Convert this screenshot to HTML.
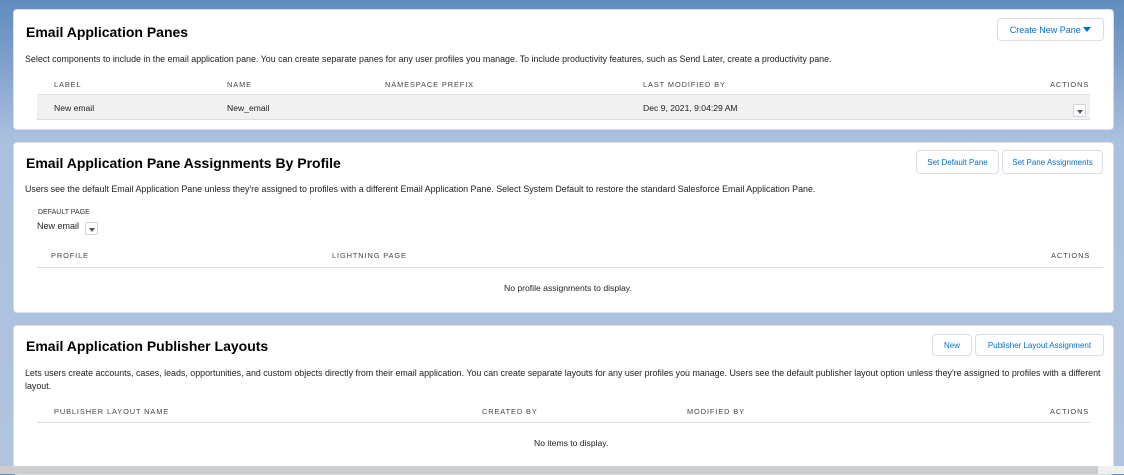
<!DOCTYPE html>
<html><head><meta charset="utf-8"><style>
*{margin:0;padding:0;box-sizing:border-box}
body{width:1124px;height:474px;overflow:hidden;position:relative;font-family:"Liberation Sans",sans-serif;background:linear-gradient(#5f8cbd 0px,#7e9fcb 60px,#aac0de 140px,#b0c4df 474px);color:#16325c}
.card{position:absolute;left:13px;width:1101px;background:#fff;border:1px solid #d8dde6;border-radius:4px}
.a{position:absolute;white-space:nowrap}
.t{font-size:14px;font-weight:bold;color:#000}
.d{font-size:8.9px;color:#222}
.h{font-size:7.4px;letter-spacing:.9px;color:#444}
.c{font-size:8.6px;color:#222}
.btn{position:absolute;border:1px solid #d8dde6;border-radius:4px;background:#fff;color:#0070d2;font-size:8.5px;display:flex;align-items:center;justify-content:center;white-space:nowrap}
.line{position:absolute;height:1px;background:#d8dde6}
.dd{position:absolute;width:13px;height:13px;border:1px solid #d0d4da;border-radius:2px;background:#fff}
.dd:after{content:"";position:absolute;left:3px;top:5px;border-left:3px solid transparent;border-right:3px solid transparent;border-top:4px solid #555}
</style></head><body>
<div class="card" style="top:9px;height:121px">
<div class="a t" style="left:12px;top:14px">Email Application Panes</div>
<div class="btn" style="left:983px;top:8px;width:107px;height:23px;font-size:9px">Create New Pane&nbsp;<span style="display:inline-block;border-left:4px solid transparent;border-right:4px solid transparent;border-top:5px solid #0070d2"></span></div>
<div class="a d" style="left:11px;top:44px">Select components to include in the email application pane. You can create separate panes for any user profiles you manage. To include productivity features, such as Send Later, create a productivity pane.</div>
<div class="a h" style="left:40px;top:70px">LABEL</div>
<div class="a h" style="left:213px;top:70px">NAME</div>
<div class="a h" style="left:371px;top:70px">NAMESPACE PREFIX</div>
<div class="a h" style="left:629px;top:70px">LAST MODIFIED BY</div>
<div class="a h" style="left:1036px;top:70px">ACTIONS</div>
<div class="line" style="left:23px;top:84px;width:1053px"></div>
<div style="position:absolute;left:23px;top:85px;width:1053px;height:25px;background:#f1f1f1;border-bottom:1px solid #d8dde6"></div>
<div class="a c" style="left:40px;top:93px">New email</div>
<div class="a c" style="left:213px;top:93px">New_email</div>
<div class="a c" style="left:629px;top:93px">Dec 9, 2021, 9:04:29 AM</div>
<div class="dd" style="left:1059px;top:94px"></div>
</div>
<div class="card" style="top:142px;height:171px">
<div class="a t" style="left:12px;top:12px">Email Application Pane Assignments By Profile</div>
<div class="btn" style="left:902px;top:7px;width:83px;height:24px;font-size:8px">Set Default Pane</div>
<div class="btn" style="left:988px;top:7px;width:101px;height:24px;font-size:8px">Set Pane Assignments</div>
<div class="a d" style="left:11px;top:41px">Users see the default Email Application Pane unless they're assigned to profiles with a different Email Application Pane. Select System Default to restore the standard Salesforce Email Application Pane.</div>
<div class="a" style="left:24px;top:66px;font-size:7px;color:#333">DEFAULT PAGE</div>
<div class="a c" style="left:23px;top:78px;font-size:9px">New email</div>
<div class="dd" style="left:71px;top:79px"></div>
<div class="a h" style="left:37px;top:108px">PROFILE</div>
<div class="a h" style="left:318px;top:108px">LIGHTNING PAGE</div>
<div class="a h" style="left:1037px;top:108px">ACTIONS</div>
<div class="line" style="left:23px;top:124px;width:1066px"></div>
<div class="a c" style="left:490px;top:140px">No profile assignments to display.</div>
</div>
<div class="card" style="top:325px;height:150px">
<div class="a t" style="left:12px;top:12px">Email Application Publisher Layouts</div>
<div class="btn" style="left:918px;top:8px;width:40px;height:22px;font-size:8px">New</div>
<div class="btn" style="left:961px;top:8px;width:129px;height:22px;font-size:8px">Publisher Layout Assignment</div>
<div class="a d" style="left:11px;top:42px">Lets users create accounts, cases, leads, opportunities, and custom objects directly from their email application. You can create separate layouts for any user profiles you manage. Users see the default publisher layout option unless they're assigned to profiles with a different</div>
<div class="a d" style="left:11px;top:55px">layout.</div>
<div class="a h" style="left:40px;top:81px">PUBLISHER LAYOUT NAME</div>
<div class="a h" style="left:468px;top:81px">CREATED BY</div>
<div class="a h" style="left:673px;top:81px">MODIFIED BY</div>
<div class="a h" style="left:1036px;top:81px">ACTIONS</div>
<div class="line" style="left:23px;top:96px;width:1053px"></div>
<div class="a c" style="left:520px;top:112px">No items to display.</div>
</div>
<div style="position:absolute;left:0;top:466px;width:1098px;height:8px;background:#cdcdcd"></div>
<div style="position:absolute;left:1098px;top:466px;width:26px;height:8px;background:#f0f0f0"></div>
</body></html>
